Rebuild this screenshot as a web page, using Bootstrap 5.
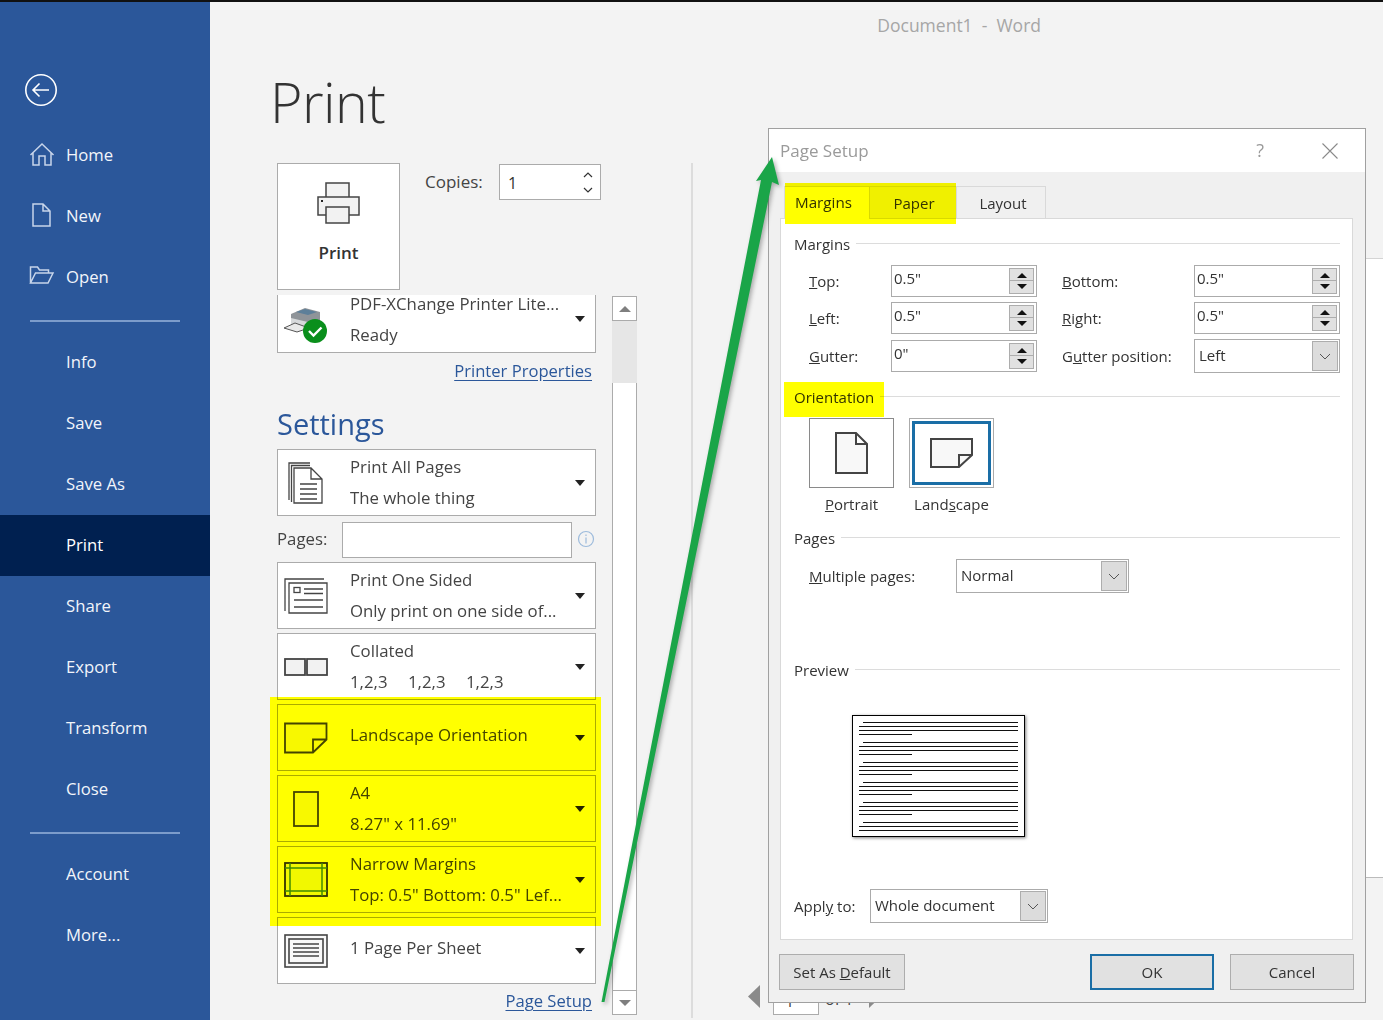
<!DOCTYPE html>
<html>
<head>
  <meta charset="utf-8">
  <meta name="viewport" content="width=device-width">
  <title>Print - Word</title>
  <link href="https://cdn.jsdelivr.net/npm/bootstrap@5.3.3/dist/css/bootstrap.min.css" rel="stylesheet" />
  <style>
    html, body { height: 1020px; overflow: hidden; }
    body { font-family: "Open Sans", "Liberation Sans", sans-serif; background: #f3f3f3; color: #444; border-top: 2px solid #111; position: relative; }

    /* backstage side bar */
    .side { width: 210px; height: 1018px; flex: none; background: #2b579a; color: #fff; padding-top: 71px; }
    .side-back { display: block; margin: 0 0 18px 25px; }
    .side-item { height: 61px; padding: 0 0 2px 66px; font-size: 16.7px; display: flex; align-items: center; position: relative; color: #f2f5fa; }
    .side-item svg { position: absolute; left: 29px; top: 16px; }
    .side-item.on { background: #002050; color: #fff; }
    .side-line { height: 2px; margin: 12px 30px 10px; background: #7c9ccb; }

    .workarea { flex: 1; min-width: 0; background: #f3f3f3; position: relative; }
    .doc-name { height: 48px; padding: 10px 342px 0 0; text-align: right; font-size: 17.5px; color: #a6a6a6; }
    .big-title { font-size: 55.5px; font-weight: 300; line-height: 76px; height: 113px; margin: 0 0 0 60px; padding-top: 14px; color: #333; letter-spacing: -.5px; }
    .print-col { width: 360px; margin-left: 67px; flex: none; }

    .print-btn { width: 123px; height: 127px; background: #fff; border: 1px solid #ababab; text-align: center; padding-top: 17px; font-size: 17px; font-weight: 600; color: #333; }
    .print-btn svg { display: block; margin: 0 auto 15px 38px; }
    .copies { margin-left: 25px; font-size: 17px; height: 37px; width: 176px; padding-top: 1px; }
    .copies-lbl { margin-top: 5px; }
    .copies-box { width: 102px; height: 36px; background: #fff; border: 1px solid #ababab; padding: 6px 8px; position: relative; font-size: 16px; color: #333; }
    .copies-box svg { position: absolute; right: 6px; top: 5px; }

    .lst { width: 319px; margin-top: 5px; position: relative; isolation: isolate; }
    .pick { height: 67px; background: #fff; border: 1px solid #ababab; margin-top: 4px; display: flex; align-items: center; font-size: 16.8px; position: relative; }
    .pick-ico { width: 56px; margin-right: 16px; flex: none; display: flex; justify-content: center; }
    .pick-txt { line-height: 31px; white-space: nowrap; color: #444; margin-top: -2px; }
    .pick-txt.one { margin-top: -6px; }
    .coll { display: inline-block; width: 58px; }
    .pick-arrow { position: absolute; right: 10px; top: 30px; width: 0; height: 0; border-left: 5px solid transparent; border-right: 5px solid transparent; border-top: 6px solid #222; }
    .pick.first { height: 58px; margin-top: 0; border-top: 0; }
    .pick.first .pick-txt { margin-top: -9px; }
    .pick.first .pick-arrow { top: 21px; }
    .side-link { color: #2b579a; text-decoration: underline; text-underline-offset: 3px; font-size: 16.6px; line-height: 24px; text-align: right; padding-right: 4px; margin-top: 6px; }
    .link-low { margin-top: 5px; }
    .set-head { color: #2b579a; font-size: 29px; line-height: 40px; height: 41px; margin: 21px 0 0; font-weight: 400; }
    .pages-row { margin-top: 6px; height: 36px; font-size: 16.8px; position: relative; }
    .pages-lbl { margin-top: -2px; }
    .pages-row .field { width: 230px; height: 36px; background: #fff; border: 1px solid #ababab; margin-left: 15px; }
    .pages-row svg { margin: -2px 0 0 5px; }
    .hl-under, .hl-over { position: absolute; left: -7px; top: 402px; width: 331px; height: 229px; background: #ff0; }
    .hl-under { z-index: -1; }
    .hl-over { z-index: 2; mix-blend-mode: multiply; }

    .scroll-rail { width: 25px; height: 719px; margin: 6px 0 0 16px; background: #fff; border: 1px solid #ababab; border-width: 0 1px; display: flex; flex-direction: column; }
    .scroll-end { height: 25px; background: #fff; border: 1px solid #ababab; margin: 0 -1px; display: flex; align-items: center; justify-content: center; }
    .scroll-thumb { height: 62px; background: #e6e6e6; margin: 0 -1px; }

    .preview-side { flex: 1; height: 855px; margin-left: 54px; border-left: 2px solid #dcdcdc; padding: 822px 0 0 55px; position: relative; }
    .page-box { width: 46px; height: 25px; background: #fff; border: 1px solid #ababab; margin: 5px 6px 0 13px; padding-left: 11px; font-size: 16px; line-height: 20px; }
    .page-of { width: 44px; font-size: 16px; line-height: 29px; }
    .sheet-edge { position: absolute; left: 300px; right: 0; top: 95px; height: 620px; background: #fff; border-top: 1px solid #d4d4d4; border-bottom: 1px solid #bbb; }

    /* the Page Setup window */
    .dlg { position: absolute; left: 768px; top: 126px; width: 598px; height: 875px; background: #f0f0f0; border: 1px solid #a0a0a0; font-size: 15px; color: #333; z-index: 3; }
    .dlg-title { height: 43px; background: #fff; color: #9a9a9a; font-size: 17px; padding-left: 11px; }
    .dlg-title svg { margin: 0 27px 0 58px; }
    .dlg-q { font-size: 18px; color: #9a9a9a; }
    .tabs { height: 33px; margin: 14px 0 0 16px; display: flex; }
    .tab-one { height: 32px; padding-top: 5px; text-align: center; border: 1px solid #d9d9d9; border-bottom: 0; background: #f0f0f0; margin-left: -1px; }
    .tab-one.on { background: #fff; height: 33px; position: relative; z-index: 1; padding: 4px 7px 0 0; width: 86px; font-size: 15.2px; }
    .tab-paper { width: 88px; padding-left: 2px; }
    .tab-lay { width: 90px; padding-left: 4px; }
    .pane { width: 573px; height: 722px; margin: -1px 0 0 11px; background: #fff; border: 1px solid #d9d9d9; padding: 0 12px 0 13px; }
    .gp-head { height: 22px; padding-bottom: 2px; display: flex; align-items: center; gap: 6px; position: relative; }
    .gp-head::after { content: ""; flex: 1; height: 1px; background: #dcdcdc; margin-top: -1px; }
    .gap-a { margin-top: 15px; }
    .gap-b { margin-top: 14px; }
    .gap-c { margin-top: 12px; }
    .gap-d { margin-top: 67px; }
    .spin-grid { display: grid; grid-template-columns: 82px 146px 157px 146px; row-gap: 5px; margin: 9px 0 0 15px; align-items: center; }
    .spin-grid .pad { padding-left: 25px; }
    .spin { height: 32px; background: #fff; border: 1px solid #ababab; padding: 1px 2px; position: relative; }
    .spin-btns { position: absolute; right: 2px; top: 2px; width: 25px; height: 26px; }
    .spin-btns div { height: 13px; background: #e1e1e1; border: 1px solid #adadad; display: flex; align-items: center; justify-content: center; }
    .spin-btns div + div { border-top: 0; }
    .combo { height: 34px; background: #fff; border: 1px solid #ababab; padding: 4px 4px; position: relative; }
    .combo-btn { position: absolute; right: 1px; top: 1px; bottom: 1px; width: 26px; background: #dcdcdc; border: 1px solid #adadad; display: flex; align-items: center; justify-content: center; }
    .combo-mid { width: 173px; }
    .combo-wide { width: 178px; }
    .orient-row { margin: 9px 0 0 15px; }
    .tile { width: 85px; height: 70px; margin-right: 15px; border: 1px solid #8a8a8a; display: flex; align-items: center; justify-content: center; background: #fff; }
    .tile.on { border-color: #ababab; padding: 2px; }
    .tile.on > div { width: 100%; height: 100%; border: 3px solid #1a6ea6; display: flex; align-items: center; justify-content: center; }
    .tile-caps { margin: 5px 0 0 15px; height: 23px; line-height: 22px; text-align: center; }
    .tile-caps div { width: 85px; margin-right: 15px; }
    .multi-row { margin: 9px 0 0 15px; }
    .multi-lbl { width: 147px; }
    .thumb { width: 173px; height: 122px; margin: 33px 0 0 58px; background: #fff; border: 1px solid #000; box-shadow: 1px 1px 3px rgba(0, 0, 0, .5); }
    .apply-row { margin-top: 52px; }
    .apply-lbl { width: 76px; }
    .mark-tabs, .mark-ori { position: absolute; background: #ff0; mix-blend-mode: multiply; z-index: 2; }
    .mark-tabs { left: 16px; top: 54px; width: 171px; height: 41px; }
    .mark-ori { left: 15px; top: 253px; width: 100px; height: 35px; }
    .dlg-foot { margin: 14px 0 0 10px; width: 575px; }
    .dlg-btn { height: 36px; width: 124px; background: #e1e1e1; border: 1px solid #adadad; display: flex; align-items: center; justify-content: center; }
    .dlg-btn.dflt { width: 126px; }
    .dlg-btn.main { border: 2px solid #1a6ea6; margin-left: 185px; margin-right: 16px; }
    .arrow-layer { position: absolute; left: 0; top: -2px; z-index: 5; pointer-events: none; filter: drop-shadow(2px 2px 2px rgba(0, 0, 0, .3)); }
  </style>
</head>
<body>
  <div class="d-flex">
    <nav class="side">
      <svg class="side-back" width="32" height="34" viewBox="0 0 32 34" fill="none" stroke="#fff" stroke-width="1.6"><circle cx="16" cy="17" r="15.2"/><path d="M24 17H8M14.5 10.5 8 17l6.500 6.500"/></svg>
      <div class="side-item"><svg width="26" height="26" viewBox="0 0 26 26" fill="none" stroke="#c8d5ea" stroke-width="1.500"><path d="M1.500 14 13 3l11.500 11M4 12v12h6v-9h6v9h6V12"/></svg>Home</div>
      <div class="side-item"><svg width="26" height="26" viewBox="0 0 26 26" fill="none" stroke="#c8d5ea" stroke-width="1.500"><path d="M4 2v22h17V9l-7-7zM14 2v7h7"/></svg>New</div>
      <div class="side-item"><svg width="26" height="26" viewBox="0 0 26 26" fill="none" stroke="#c8d5ea" stroke-width="1.500"><path d="M1.500 20V4h7l2 3h9v3M1.500 20h17.500l5-10H6.500z"/></svg>Open</div>
      <div class="side-line"></div>
      <div class="side-item">Info</div>
      <div class="side-item">Save</div>
      <div class="side-item">Save As</div>
      <div class="side-item on">Print</div>
      <div class="side-item">Share</div>
      <div class="side-item">Export</div>
      <div class="side-item">Transform</div>
      <div class="side-item">Close</div>
      <div class="side-line"></div>
      <div class="side-item">Account</div>
      <div class="side-item">More...</div>
    </nav>

    <main class="workarea">
      <div class="doc-name">Document1 &nbsp;-&nbsp; Word</div>
      <h1 class="big-title">Print</h1>
      <div class="d-flex">
        <div class="print-col d-flex flex-column">
          <div class="d-flex">
            <div class="print-btn">
              <svg width="44" height="44" viewBox="0 0 44 44" fill="#f2f2f2" stroke="#444" stroke-width="1.500"><rect x="10" y="2" width="23" height="15"/><rect x="2" y="16" width="41" height="18"/><rect x="10" y="26" width="23" height="16"/><rect x="5" y="19" width="2" height="2" fill="#222" stroke="none"/></svg>
              Print
            </div>
            <div class="copies d-flex justify-content-between">
              <span class="copies-lbl">Copies:</span>
              <div class="copies-box">1
                <svg width="12" height="26" viewBox="0 0 12 26" fill="none" stroke="#333" stroke-width="1.200"><path d="M2 7l4-4 4 4M2 18l4 4 4-4"/></svg>
              </div>
            </div>
          </div>
          <div class="d-flex">
            <div class="lst">
              <div class="hl-under"></div>
              <div class="pick first">
                <div class="pick-ico">
                  <svg width="46" height="38" viewBox="0 0 46 38"><path d="M8 9l14-6 15 4v13H8z" fill="#8f9499"/><path d="M13 7l9-3 12 3-9 3z" fill="#5d7f99"/><path d="M8 13l21 5v7L8 20z" fill="#d7d9db"/><path d="M1 23l11-5 14 5-12 4z" fill="#e9e9e9" stroke="#555"/><circle cx="32" cy="26" r="12" fill="#0a8f1c"/><path d="M26 26l4.500 4.500 8-8" fill="none" stroke="#fff" stroke-width="2.400"/></svg>
                </div>
                <div class="pick-txt">PDF-XChange Printer Lite...<br>Ready</div>
                <span class="pick-arrow"></span>
              </div>
              <div class="side-link">Printer Properties</div>
              <h2 class="set-head">Settings</h2>
              <div class="pick">
                <div class="pick-ico"><svg width="36" height="42" viewBox="0 0 36 42" fill="none" stroke="#444" stroke-width="1.300"><path d="M1 38V1h21M3.500 40V3.500H22M6 41V6h17l11 11v24zM23 6v11h11M12 22h17M12 27h17M12 32h17M12 37h17"/></svg></div>
                <div class="pick-txt">Print All Pages<br>The whole thing</div>
                <span class="pick-arrow"></span>
              </div>
              <div class="pages-row d-flex align-items-center">
                <span class="pages-lbl">Pages:</span>
                <div class="field"></div>
                <svg width="18" height="18" viewBox="0 0 18 18" fill="none" stroke="#9dbbdc" stroke-width="1.200"><circle cx="9" cy="9" r="7.500"/><path d="M9 7.500v6M9 4.500v1.500"/></svg>
              </div>
              <div class="pick">
                <div class="pick-ico"><svg width="44" height="36" viewBox="0 0 44 36" fill="none" stroke="#444" stroke-width="1.300"><path d="M1 33V1h39M5 35V5h38v30zM20 11h19M20 15.500h19M10 22h29M10 29h29"/><rect x="10" y="9.500" width="6" height="5"/></svg></div>
                <div class="pick-txt">Print One Sided<br>Only print on one side of...</div>
                <span class="pick-arrow"></span>
              </div>
              <div class="pick">
                <div class="pick-ico"><svg width="44" height="18" viewBox="0 0 44 18" fill="#f2f2f2" stroke="#444" stroke-width="1.800"><rect x="1" y="1" width="20" height="16"/><rect x="23" y="1" width="20" height="16"/></svg></div>
                <div class="pick-txt">Collated<br><span class="coll">1,2,3</span><span class="coll">1,2,3</span>1,2,3</div>
                <span class="pick-arrow"></span>
              </div>
              <div class="pick">
                <div class="pick-ico"><svg width="44" height="32" viewBox="0 0 44 32" fill="#f8f8f8" stroke="#444" stroke-width="1.800"><path d="M1 1.500h41.500v16L29 30.500H1zM29 30.500v-13h13.500"/></svg></div>
                <div class="pick-txt one">Landscape Orientation</div>
                <span class="pick-arrow"></span>
              </div>
              <div class="pick">
                <div class="pick-ico"><svg width="26" height="36" viewBox="0 0 26 36" fill="#f8f8f8" stroke="#444" stroke-width="1.800"><rect x="1" y="1" width="24" height="34"/></svg></div>
                <div class="pick-txt">A4<br>8.27" x 11.69"</div>
                <span class="pick-arrow"></span>
              </div>
              <div class="pick">
                <div class="pick-ico"><svg width="44" height="36" viewBox="0 0 44 36" fill="#f2f8c8" stroke="#333" stroke-width="1.800"><rect x="1" y="1" width="42" height="33"/><path d="M6 1v33M38 1v33M1 6h42M1 29h42" fill="none" stroke="#3f8a20" stroke-width="1.500"/></svg></div>
                <div class="pick-txt">Narrow Margins<br>Top: 0.5" Bottom: 0.5" Lef...</div>
                <span class="pick-arrow"></span>
              </div>
              <div class="pick">
                <div class="pick-ico"><svg width="44" height="34" viewBox="0 0 44 34" fill="#f8f8f8" stroke="#444" stroke-width="1.600"><rect x="1" y="1" width="42" height="32"/><rect x="5" y="5" width="34" height="24"/><path d="M9 10h26M9 14h26M9 18h26M9 22h26" fill="none"/></svg></div>
                <div class="pick-txt one">1 Page Per Sheet</div>
                <span class="pick-arrow"></span>
              </div>
              <div class="side-link link-low">Page Setup</div>
              <div class="hl-over"></div>
            </div>
            <div class="scroll-rail">
              <div class="scroll-end"><svg width="14" height="8" viewBox="0 0 14 8"><path d="M1 7l6-6 6 6z" fill="#7f7f7f"/></svg></div>
              <div class="scroll-thumb"></div>
              <div class="flex-grow-1"></div>
              <div class="scroll-end"><svg width="14" height="8" viewBox="0 0 14 8"><path d="M1 1l6 6 6-6z" fill="#7f7f7f"/></svg></div>
            </div>
          </div>
        </div>
        <div class="preview-side d-flex align-items-start">
          <div class="sheet-edge"></div>
          <svg width="12" height="23" viewBox="0 0 12 23"><path d="M12 0v23L0 11.500z" fill="#8a8a8a"/></svg>
          <div class="page-box">1</div>
          <div class="page-of">of 1</div>
          <svg width="12" height="23" viewBox="0 0 12 23"><path d="M0 0v23l12-11.500z" fill="#8a8a8a"/></svg>
        </div>
      </div>
    </main>
  </div>

  <section class="dlg">
    <div class="dlg-title d-flex align-items-center">
      <span class="flex-grow-1">Page Setup</span>
      <span class="dlg-q">?</span>
      <svg width="16" height="16" viewBox="0 0 16 16" fill="none" stroke="#8a8a8a" stroke-width="1.100"><path d="M.5.500l15 15M15.500.500l-15 15"/></svg>
    </div>
    <div class="tabs">
      <div class="tab-one on">Margins</div>
      <div class="tab-one tab-paper">Paper</div>
      <div class="tab-one tab-lay">Layout</div>
    </div>
    <div class="pane">
      <div class="gp-head gap-a">Margins</div>
      <div class="spin-grid">
        <span><u>T</u>op:</span>
        <div class="spin">0.5"<div class="spin-btns"><div><svg width="10" height="6"><path d="M0 6l5-5 5 5z" fill="#111"/></svg></div><div><svg width="10" height="6"><path d="M0 0l5 5 5-5z" fill="#111"/></svg></div></div></div>
        <span class="pad"><u>B</u>ottom:</span>
        <div class="spin">0.5"<div class="spin-btns"><div><svg width="10" height="6"><path d="M0 6l5-5 5 5z" fill="#111"/></svg></div><div><svg width="10" height="6"><path d="M0 0l5 5 5-5z" fill="#111"/></svg></div></div></div>
        <span><u>L</u>eft:</span>
        <div class="spin">0.5"<div class="spin-btns"><div><svg width="10" height="6"><path d="M0 6l5-5 5 5z" fill="#111"/></svg></div><div><svg width="10" height="6"><path d="M0 0l5 5 5-5z" fill="#111"/></svg></div></div></div>
        <span class="pad"><u>R</u>ight:</span>
        <div class="spin">0.5"<div class="spin-btns"><div><svg width="10" height="6"><path d="M0 6l5-5 5 5z" fill="#111"/></svg></div><div><svg width="10" height="6"><path d="M0 0l5 5 5-5z" fill="#111"/></svg></div></div></div>
        <span><u>G</u>utter:</span>
        <div class="spin">0"<div class="spin-btns"><div><svg width="10" height="6"><path d="M0 6l5-5 5 5z" fill="#111"/></svg></div><div><svg width="10" height="6"><path d="M0 0l5 5 5-5z" fill="#111"/></svg></div></div></div>
        <span class="pad">G<u>u</u>tter position:</span>
        <div class="combo">Left<div class="combo-btn"><svg width="12" height="7" viewBox="0 0 12 7" fill="none" stroke="#555"><path d="M1 1l5 5 5-5"/></svg></div></div>
      </div>
      <div class="gp-head gap-b">Orientation</div>
      <div class="orient-row d-flex">
        <div class="tile"><svg width="33" height="42" viewBox="0 0 33 42" fill="#f8f8f8" stroke="#444" stroke-width="2"><path d="M1 1h20l11 11v29H1zM21 1v11h11"/></svg></div>
        <div class="tile on"><div><svg width="43" height="30" viewBox="0 0 43 30" fill="#f8f8f8" stroke="#444" stroke-width="2"><path d="M1 1h41v16L29 29H1zM29 29V17h13"/></svg></div></div>
      </div>
      <div class="tile-caps d-flex">
        <div><u>P</u>ortrait</div>
        <div>Land<u>s</u>cape</div>
      </div>
      <div class="gp-head gap-c">Pages</div>
      <div class="multi-row d-flex align-items-center">
        <span class="multi-lbl"><u>M</u>ultiple pages:</span>
        <div class="combo combo-mid">Normal<div class="combo-btn"><svg width="12" height="7" viewBox="0 0 12 7" fill="none" stroke="#555"><path d="M1 1l5 5 5-5"/></svg></div></div>
      </div>
      <div class="gp-head gap-d">Preview</div>
      <div class="thumb">
        <svg width="171" height="120" viewBox="0 0 171 120" fill="none" stroke="#111"><path d="M10 6.500h155M6 10.500h159M6 14.500h159M6 18.500h53M10 26.500h155M6 30.500h159M6 34.500h159M6 38.500h53M10 46.500h155M6 50.500h159M6 54.500h159M6 58.500h53M10 66.500h155M6 70.500h159M6 74.500h159M6 78.500h53M10 86.500h155M6 90.500h159M6 94.500h159M6 98.500h53M10 106.500h155M6 110.500h159M6 114.500h159"/></svg>
      </div>
      <div class="apply-row d-flex align-items-center">
        <span class="apply-lbl">Appl<u>y</u> to:</span>
        <div class="combo combo-wide">Whole document<div class="combo-btn"><svg width="12" height="7" viewBox="0 0 12 7" fill="none" stroke="#555"><path d="M1 1l5 5 5-5"/></svg></div></div>
      </div>
    </div>
    <div class="dlg-foot d-flex">
      <div class="dlg-btn dflt"><span>Set As <u>D</u>efault</span></div>
      <div class="dlg-btn main">OK</div>
      <div class="dlg-btn">Cancel</div>
    </div>
    <div class="mark-tabs"></div>
    <div class="mark-ori"></div>
  </section>

  <svg class="arrow-layer" width="1383" height="1020" viewBox="0 0 1383 1020"><path d="M601.500 1002 L761 180 L756 181 L772 157 L779 185 L772 182 L604.500 1002z" fill="#1aa548"/></svg>

  <script src="https://cdn.jsdelivr.net/npm/bootstrap@5.3.3/dist/js/bootstrap.bundle.min.js"></script>
</body>
</html>
